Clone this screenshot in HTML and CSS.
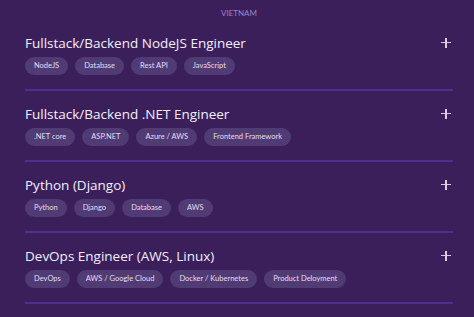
FILE: index.html
```html
<!DOCTYPE html>
<html lang="en">
<head>
  <meta charset="UTF-8" />
  <meta name="viewport" content="width=device-width, initial-scale=1.0"/>
  <title>Jobs - Vietnam</title>
  <link rel="stylesheet" href="styles.css">
</head>
<body>
  <div class="jobs">
    <div class="country">VIETNAM</div>

    <div class="job">
      <div class="job-head">
        <h3>Fullstack/Backend NodeJS Engineer</h3>
        <span class="plus"></span>
      </div>
      <div class="tags">
        <span class="tag">NodeJS</span>
        <span class="tag">Database</span>
        <span class="tag">Rest API</span>
        <span class="tag">JavaScript</span>
      </div>
    </div>

    <div class="job">
      <div class="job-head">
        <h3>Fullstack/Backend .NET Engineer</h3>
        <span class="plus"></span>
      </div>
      <div class="tags">
        <span class="tag">.NET core</span>
        <span class="tag">ASP.NET</span>
        <span class="tag">Azure / AWS</span>
        <span class="tag">Frontend Framework</span>
      </div>
    </div>

    <div class="job">
      <div class="job-head">
        <h3>Python (Django)</h3>
        <span class="plus"></span>
      </div>
      <div class="tags">
        <span class="tag">Python</span>
        <span class="tag">Django</span>
        <span class="tag">Database</span>
        <span class="tag">AWS</span>
      </div>
    </div>

    <div class="job">
      <div class="job-head">
        <h3>DevOps Engineer (AWS, Linux)</h3>
        <span class="plus"></span>
      </div>
      <div class="tags">
        <span class="tag">DevOps</span>
        <span class="tag">AWS / Google Cloud</span>
        <span class="tag">Docker / Kubernetes</span>
        <span class="tag">Product Deloyment</span>
      </div>
    </div>
  </div>
</body>
</html>
```

FILE: styles.css
```css
body {
  margin: 0;
  background: #3a1f5b;
  font-family: "Open Sans", sans-serif;
  color: #fff;
}
.jobs {
  padding: 8px 21px 0 25px;
}
.country {
  text-align: center;
  font-family: "Lato", sans-serif;
  font-size: 8px;
  color: #9f83d0;
  margin-bottom: 16px;
}
.job {
  border-bottom: 2px solid #4f2f8d;
  padding: 0 0 14px;
  margin-bottom: 14px;
}
.job-head {
  display: flex;
  align-items: center;
  justify-content: space-between;
}
h3 {
  margin: 0;
  font-size: 13.5px;
  font-weight: 500;
  line-height: 18px;
  color: #f4eefb;
}
.plus {
  position: relative;
  width: 10px;
  height: 10px;
  margin-right: 2px;
}
.plus::before,
.plus::after {
  content: "";
  position: absolute;
  background: #d9cdea;
}
.plus::before {
  left: 0;
  top: 4px;
  width: 10px;
  height: 1.3px;
}
.plus::after {
  left: 4.3px;
  top: 0;
  width: 1.3px;
  height: 10px;
}
.tags {
  display: flex;
  gap: 7px;
  margin-top: 5px;
}
.tag {
  font-family: "Lato", sans-serif;
  font-size: 7.5px;
  line-height: 18px;
  padding: 0 9px;
  border-radius: 9px;
  background: #503b75;
  color: #e6def2;
}
```
